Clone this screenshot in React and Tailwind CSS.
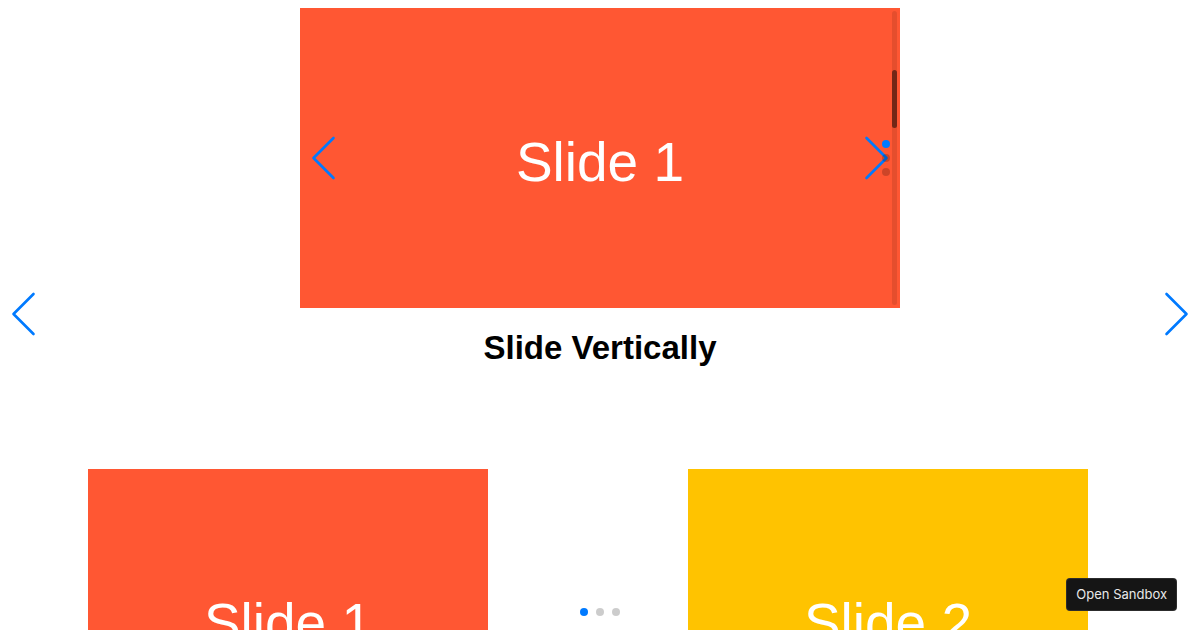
import React from "react";

function Chevron({ dir = "right", className = "" }) {
  return (
    <svg
      viewBox="0 0 24 44"
      className={className}
      fill="none"
      stroke="#007aff"
      strokeWidth="2.6"
      strokeLinecap="round"
      strokeLinejoin="round"
    >
      {dir === "right" ? (
        <polyline points="2,2 22,22 2,42" />
      ) : (
        <polyline points="22,2 2,22 22,42" />
      )}
    </svg>
  );
}

function Slide({ color, label, className = "" }) {
  return (
    <div
      className={`flex items-center justify-center shrink-0 ${color} ${className}`}
    >
      <span className="mt-[8px] text-[55px] leading-none text-white font-['Liberation_Sans',Arial,sans-serif]">
        {label}
      </span>
    </div>
  );
}

export default function App() {
  return (
    <div className="relative w-full h-[630px] overflow-hidden bg-white font-['Liberation_Sans',Arial,sans-serif]">
      {/* outer slider arrows */}
      <Chevron dir="left" className="absolute left-[11px] top-[292px] w-[25px] h-[44px]" />
      <Chevron dir="right" className="absolute left-[1164px] top-[292px] w-[25px] h-[44px]" />

      <section className="flex flex-col items-center pt-[8px]">
        <div className="relative w-[600px] h-[300px]">
          <Slide color="bg-[#ff5733]" label="Slide 1" className="w-full h-full" />

          <Chevron dir="left" className="absolute left-[11px] top-[128px] w-[25px] h-[44px]" />
          <Chevron dir="right" className="absolute left-[564px] top-[128px] w-[25px] h-[44px]" />

          <div className="absolute right-[10px] top-[132px] flex flex-col gap-[6px]">
            <span className="block w-[8px] h-[8px] rounded-full bg-[#007aff]" />
            <span className="block w-[8px] h-[8px] rounded-full bg-black/20" />
            <span className="block w-[8px] h-[8px] rounded-full bg-black/20" />
          </div>

          <div className="absolute right-[3px] top-[3px] bottom-[3px] w-[5px] rounded-full bg-black/10">
            <div className="mt-[59px] h-[58px] w-full rounded-full bg-black/50" />
          </div>
        </div>

        <h2 className="mt-[22px] text-[33px] leading-[36px] font-bold text-black">
          Slide Vertically
        </h2>
      </section>

      <section className="mt-[103px] flex pl-[88px]">
        <Slide color="bg-[#ff5733]" label="Slide 1" className="w-[400px] h-[300px]" />
        <div className="w-[200px] shrink-0 flex justify-center gap-[8px] pt-[139px] pl-[24px]">
          <span className="block w-[8px] h-[8px] rounded-full bg-[#007aff]" />
          <span className="block w-[8px] h-[8px] rounded-full bg-black/20" />
          <span className="block w-[8px] h-[8px] rounded-full bg-black/20" />
        </div>
        <Slide color="bg-[#ffc300]" label="Slide 2" className="w-[400px] h-[300px]" />
      </section>

      <button className="absolute right-[23px] bottom-[19px] h-[33px] px-[9px] rounded-[4px] bg-[#151515] border border-white/10 text-[13px] text-[#e8e8e8] font-['Inter',sans-serif]">
        Open Sandbox
      </button>
    </div>
  );
}
